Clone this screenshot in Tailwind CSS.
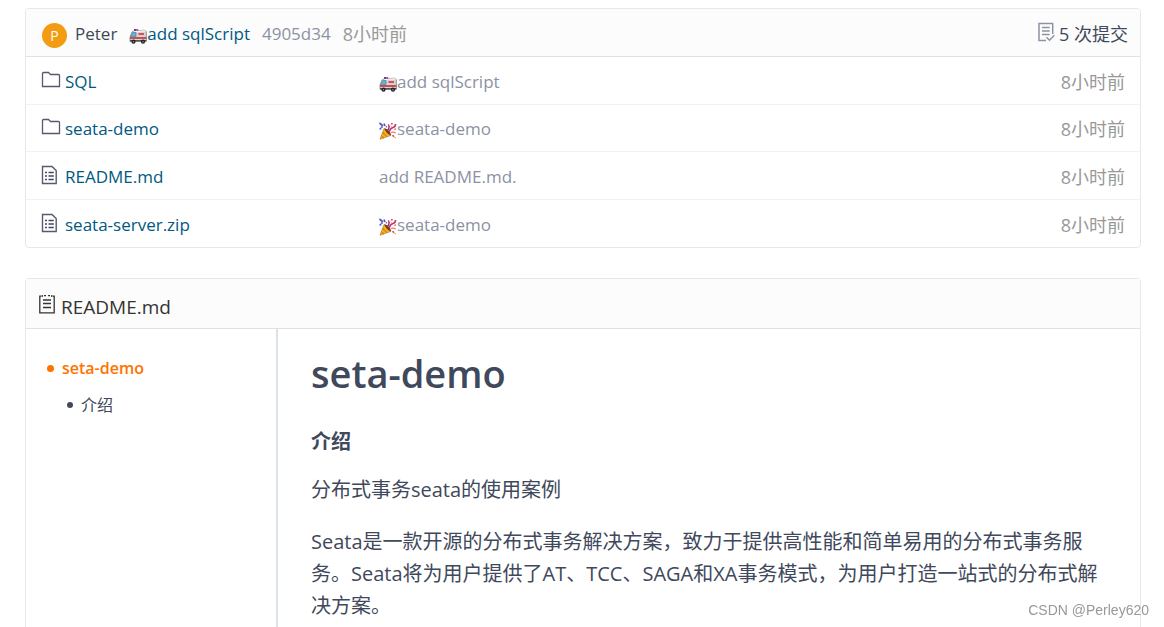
<!DOCTYPE html>
<html lang="zh-CN">
<head>
<meta charset="utf-8">
<meta name="viewport" content="width=device-width, initial-scale=1">
<title>seata-demo</title>
<script src="https://cdn.jsdelivr.net/npm/@tailwindcss/browser@4"></script>
</head>
<body class="bg-white font-['Open_Sans','Noto_Sans_CJK_SC',sans-serif] text-[17px] leading-6 text-[#40485b]">
<svg class="hidden" aria-hidden="true">
  <symbol id="ambulance" viewBox="0 0 18 18">
    <path d="M1 10 3 5Q3.5 4 5 4L15 3.2Q17.2 3.2 17.4 5V13.5H1Z" fill="#d4d4d4" stroke="#777" stroke-width=".7"/>
    <path d="M5 4 15 3.2Q17 3.2 17.2 4.5L4 5.5Z" fill="#f0f0f0"/>
    <path d="M1.8 9.5 3.7 5.5H7V9.5Z" fill="#56b9df" stroke="#477686" stroke-width=".6"/>
    <path d="M9.5 6.2H15V7.8H9.5Z" fill="#e51e2b"/>
    <path d="M1 10.2H17.4V11.8H1Z" fill="#c9222c"/>
    <path d="M5 1.9H7.2V4H5Z" fill="#3252c4"/><path d="M7.2 1.9H9.2V3.8H7.2Z" fill="#e63c3c"/>
    <path d="M.8 13H17.5V14.8H.8Z" fill="#555"/>
    <circle cx="4.5" cy="14.7" r="2.1" fill="#222"/><circle cx="4.5" cy="14.7" r=".7" fill="#aaa"/>
    <circle cx="14" cy="14.7" r="2.1" fill="#222"/><circle cx="14" cy="14.7" r=".7" fill="#aaa"/>
  </symbol>
  <symbol id="party" viewBox="0 0 18 18">
    <path d="M1 17.3 5 6.5Q10 7.5 12 13.3Z" fill="#f8b320" stroke="#a66a17" stroke-width=".6"/>
    <path d="m3.8 10.5 4.2 4.2M2.7 14l2 2" stroke="#d97b16" stroke-width="1.2"/>
    <path d="M5.2 6.5Q10 7 12 13.3 7.5 12 5.2 6.5Z" fill="#6d3b1d"/>
    <path d="M8.5 8.5Q11 6 9.5 2.5M2 4.5l1.5 1.3" stroke="#a82f7a" stroke-width="1.5" fill="none"/>
    <path d="M10 10Q11.5 6 14 5.5T16.5 2" stroke="#b83c66" stroke-width="1.6" fill="none"/>
    <path d="M12 10.5Q14 9.5 16.8 11" stroke="#e27b83" stroke-width="1.3" fill="none"/>
    <path d="M.5 1 4 4M5 1.5l1 2.5M.7 6.2l1.5 1" stroke="#3d65cf" stroke-width="1.7"/>
    <path d="M12.3 1.2l1.2 1.2M15.5 7l1.3.4M13.5 13.3l1.4 1.3M7 4.4l.8.8" stroke="#dc3554" stroke-width="1.5"/>
    <path d="M15.3 14.7l1.3 1.2M11.8 4.2l.8.8" stroke="#f1bd48" stroke-width="1.4"/>
  </symbol>
  <symbol id="folder" viewBox="0 0 20 18">
    <path d="M1.5 15.5V2.5Q1.5 1.5 2.5 1.5H7.5L9.5 3.5H17.5Q18.5 3.5 18.5 4.5V15.5Z" fill="none" stroke="#555a70" stroke-width="1.3"/>
  </symbol>
  <symbol id="file" viewBox="0 0 16 20">
    <path d="M1.5 1.5H11L15.2 5.5V18.5H1.5Z" fill="none" stroke="#555a70" stroke-width="1.4"/>
    <path d="M4 7.5h2M4 11h2M4 14.5h2M7.5 7.5h5.3M7.5 11h5.3M7.5 14.5h5.3" stroke="#40485b" stroke-width="1.5"/>
  </symbol>
</svg>
<div class="flex h-screen flex-col gap-[30px] overflow-hidden pt-2 pr-[23px] pl-[25px]">
  <section class="shrink-0 overflow-hidden rounded border border-[#e3e9ed]">
    <header class="flex h-12 items-center border-b border-[#dce3e8] bg-[#fcfcfc] pt-[2px] pr-3 pl-4">
      <span class="mt-1 flex size-[25px] items-center justify-center rounded-full bg-[#f39c12] text-sm text-white">P</span>
      <a href="#" class="ml-2">Peter</a>
      <a href="#" class="ml-3 flex items-center text-[#005980]"><svg class="mt-1 size-[18px]"><use href="#ambulance"/></svg>add sqlScript</a>
      <a href="#" class="ml-3 text-[#8c92a4]">4905d34</a>
      <span class="ml-3 text-[18px] text-[#999]">8小时前</span>
      <a href="#" class="ml-auto flex items-center gap-1 text-[18px]">
        <svg class="mb-1 h-5 w-[17px]" viewBox="0 0 17 20" fill="none" stroke="#8c92a4" stroke-width="1.5"><path d="M8 18.5H1V1.5H14.7V12M4 5.5h7.7M4 9h7.7M4 12.5h7.7M8.5 15.2l3 3 4.8-5"/></svg>
        5 次提交</a>
    </header>
    <table class="w-full table-fixed border-collapse text-left">
      <colgroup><col class="w-[353px]"><col><col class="w-[120px]"></colgroup>
      <tbody class="text-[#8c92a4]">
        <tr class="h-[47px] border-b border-[#f0f2f4]">
          <td class="pt-[3px] pl-[15px]"><a href="#" class="flex items-center gap-1 text-[#005980]"><svg class="mb-1 h-[18px] w-5"><use href="#folder"/></svg>SQL</a></td>
          <td class="pt-[3px]"><a href="#" class="flex items-center"><svg class="mt-1 size-[18px]"><use href="#ambulance"/></svg>add sqlScript</a></td>
          <td class="pt-[3px] pr-[15px] text-right text-[18px] text-[#999]">8小时前</td>
        </tr>
        <tr class="h-[47px] border-b border-[#f0f2f4]">
          <td class="pt-[3px] pl-[15px]"><a href="#" class="flex items-center gap-1 text-[#005980]"><svg class="mb-1 h-[18px] w-5"><use href="#folder"/></svg>seata-demo</a></td>
          <td class="pt-[3px]"><a href="#" class="flex items-center"><svg class="mt-1 size-[18px]"><use href="#party"/></svg>seata-demo</a></td>
          <td class="pt-[3px] pr-[15px] text-right text-[18px] text-[#999]">8小时前</td>
        </tr>
        <tr class="h-12 border-b border-[#f0f2f4]">
          <td class="pt-[3px] pl-[15px]"><a href="#" class="flex items-center gap-2 text-[#005980]"><svg class="mb-1 h-5 w-4"><use href="#file"/></svg>README.md</a></td>
          <td class="pt-[3px]"><a href="#">add README.md.</a></td>
          <td class="pt-[3px] pr-[15px] text-right text-[18px] text-[#999]">8小时前</td>
        </tr>
        <tr class="h-12">
          <td class="pt-[3px] pl-[15px]"><a href="#" class="flex items-center gap-2 text-[#005980]"><svg class="mb-1 h-5 w-4"><use href="#file"/></svg>seata-server.zip</a></td>
          <td class="pt-[3px]"><a href="#" class="flex items-center"><svg class="mt-1 size-[18px]"><use href="#party"/></svg>seata-demo</a></td>
          <td class="pt-[3px] pr-[15px] text-right text-[18px] text-[#999]">8小时前</td>
        </tr>
      </tbody>
    </table>
  </section>
  <section class="flex min-h-0 flex-1 flex-col rounded-t border border-b-0 border-[#e3e9ed]">
    <header class="flex h-[50px] shrink-0 items-center gap-[6px] border-b border-[#dce3e8] bg-[#fcfcfc] pt-[6px] pl-[13px] text-[19px] text-[#333]">
      <svg class="mb-[6px] h-5 w-4" viewBox="0 0 16 20" fill="none" stroke="#333" stroke-width="1.3"><path d="M2 2.2H.8V18.8H15.2V2.2H14M5 1.7h2M9 1.7h2M3.2 1v2M12.8 1v2M4 6h8M4 9.5h8M4 13.5h8"/></svg>
      README.md
    </header>
    <div class="flex min-h-0 flex-1">
      <nav class="w-[252px] shrink-0 border-r-2 border-[#dce3e8] pt-[27px] pl-[21px] text-base">
        <a href="#seta-demo" class="flex items-center gap-2 font-semibold text-[#fe7300]"><span class="size-[7px] rounded-full bg-[#fe7300]"></span>seta-demo</a>
        <a href="#intro" class="mt-[13px] ml-5 flex items-center gap-2"><span class="size-[6px] rounded-full bg-[#40485b]"></span>介绍</a>
      </nav>
      <article class="min-w-0 flex-1 pt-[18px] pr-10 pl-[33px] text-[20px] leading-8">
        <h1 id="seta-demo" class="text-[38px] leading-[52px] font-semibold">seta-demo</h1>
        <h4 id="intro" class="mt-[27px] font-bold">介绍</h4>
        <p class="mt-4">分布式事务seata的使用案例</p>
        <p class="mt-5">Seata是一款开源的分布式事务解决方案，致力于提供高性能和简单易用的分布式事务服务。Seata将为用户提供了AT、TCC、SAGA和XA事务模式，为用户打造一站式的分布式解决方案。</p>
      </article>
    </div>
  </section>
</div>
<div class="fixed right-[15px] bottom-[7px] font-['Liberation_Sans',sans-serif] text-sm leading-5 text-[#999]">CSDN @Perley620</div>
</body>
</html>
